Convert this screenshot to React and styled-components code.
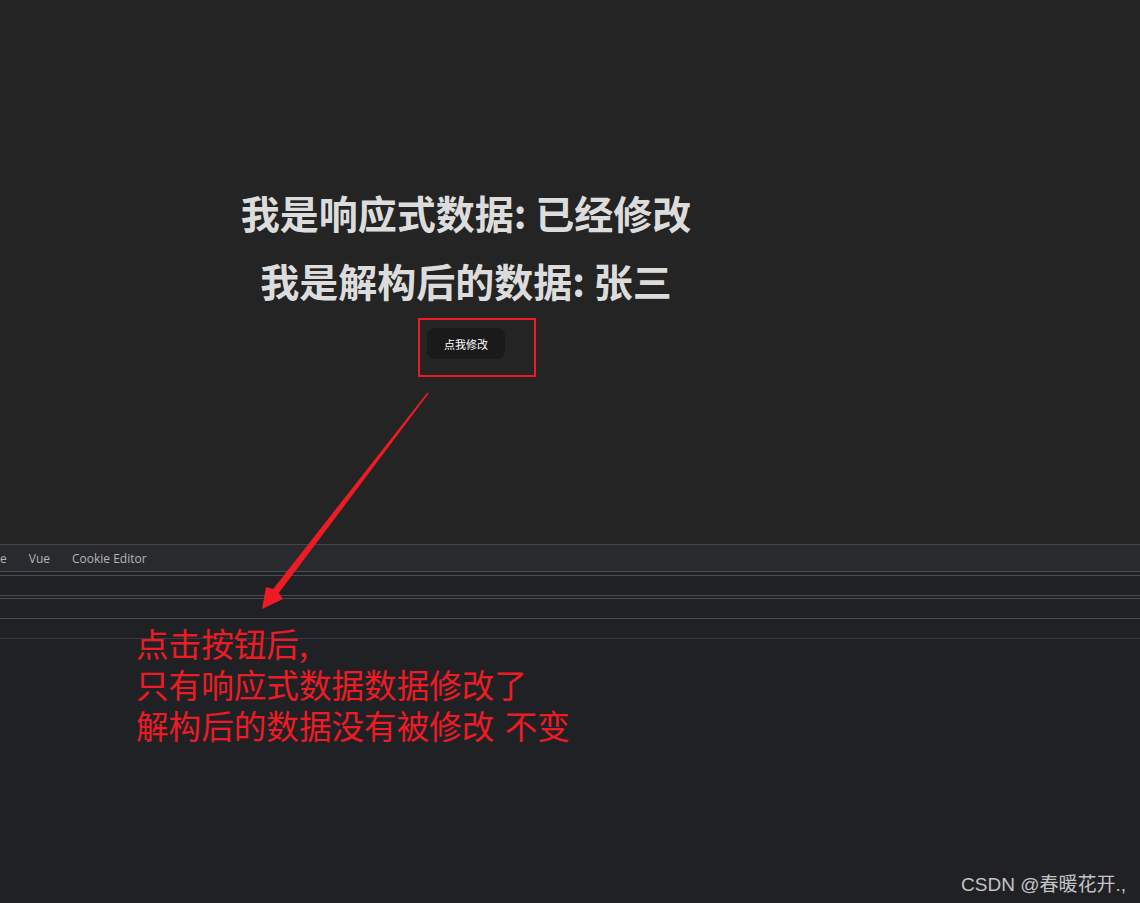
import styled, { createGlobalStyle } from "styled-components";

const Global = createGlobalStyle`
    html, body {
        margin: 0;
        padding: 0;
        background: #202124;
    }
`;

const Page = styled.div`
    position: relative;
    width: 1140px;
    height: 903px;
    overflow: hidden;
    display: flex;
    flex-direction: column;
    background: #202124;
`;

const Preview = styled.div`
    height: 544px;
    background: #242424;
    display: flex;
`;

const Content = styled.div`
    width: 932px;
    padding-top: 178px;
    display: flex;
    flex-direction: column;
    align-items: center;
`;

const Heading = styled.h1`
    margin: 0;
    font-family: "Noto Sans CJK SC", "Noto Sans", sans-serif;
    font-size: 39px;
    font-weight: 700;
    line-height: 68px;
    color: rgba(255, 255, 255, 0.87);
    white-space: nowrap;
`;

const ButtonWrap = styled.div`
    position: relative;
    margin-top: 14px;
`;

const Button = styled.button`
    display: block;
    width: 78px;
    height: 31px;
    border: 1px solid transparent;
    border-radius: 8px;
    background: #1a1a1a;
    color: #fff;
    font-family: "Noto Sans CJK SC", sans-serif;
    font-size: 11px;
    padding: 0;
    cursor: pointer;
`;

const MarkBox = styled.div`
    position: absolute;
    left: -9px;
    top: -10px;
    width: 114px;
    height: 55px;
    border: 2px solid #ed1c24;
    pointer-events: none;
`;

const Devtools = styled.div`
    flex: 1;
    display: flex;
    flex-direction: column;
    border-top: 1px solid #45464a;
`;

const Toolbar = styled.div`
    height: 26px;
    display: flex;
    align-items: center;
    gap: 22px;
    padding-left: 0;
    background: #292a2d;
    border-bottom: 1px solid #4a4b4f;
`;

const Tab = styled.span`
    font-family: "Open Sans", "Noto Sans", sans-serif;
    font-size: 12px;
    color: #b4b5b8;
`;

const Bar = styled.div`
    height: ${(p) => p.$h}px;
    margin-top: ${(p) => p.$gap || 0}px;
    border-top: ${(p) => (p.$top ? "1px solid #4a4b4f" : "none")};
    border-bottom: 1px solid ${(p) => p.$line || "#4a4b4f"};
`;

const Note = styled.div`
    position: absolute;
    left: 136px;
    top: 622px;
    font-family: "Noto Sans CJK SC", sans-serif;
    font-size: 32.6px;
    line-height: 41px;
    word-spacing: 3px;
    color: #ed1c24;
    white-space: pre;
`;

const Watermark = styled.div`
    position: absolute;
    right: 14px;
    bottom: 7px;
    font-family: "Liberation Sans", "Noto Sans CJK SC", sans-serif;
    font-size: 19px;
    color: #c4c4c4;
`;

const Overlay = styled.svg`
    position: absolute;
    left: 0;
    top: 0;
    pointer-events: none;
`;

const App = () => {
    return (
        <Page>
            <Global />
            <Preview>
                <Content>
                    <Heading>我是响应式数据: 已经修改</Heading>
                    <Heading>我是解构后的数据: 张三</Heading>
                    <ButtonWrap>
                        <Button>点我修改</Button>
                        <MarkBox />
                    </ButtonWrap>
                </Content>
            </Preview>
            <Devtools>
                <Toolbar>
                    <Tab>e</Tab>
                    <Tab>Vue</Tab>
                    <Tab>Cookie Editor</Tab>
                </Toolbar>
                <Bar $h={19} $gap={3} $top />
                <Bar $h={19} $gap={2} $top />
                <Bar $h={19} $line="#3a3b3e" />
            </Devtools>
            <Note>{"点击按钮后,\n只有响应式数据数据修改了\n解构后的数据没有被修改 不变"}</Note>
            <Watermark>CSDN @春暖花开.,</Watermark>
            <Overlay width="1140" height="903" viewBox="0 0 1140 903">
                <polygon
                    fill="#ed1c24"
                    points="427.4,392.5 273.2,588.9 266,587 262,609 283,599 278.8,593.1 428.6,393.5"
                />
            </Overlay>
        </Page>
    );
};

export default App;
